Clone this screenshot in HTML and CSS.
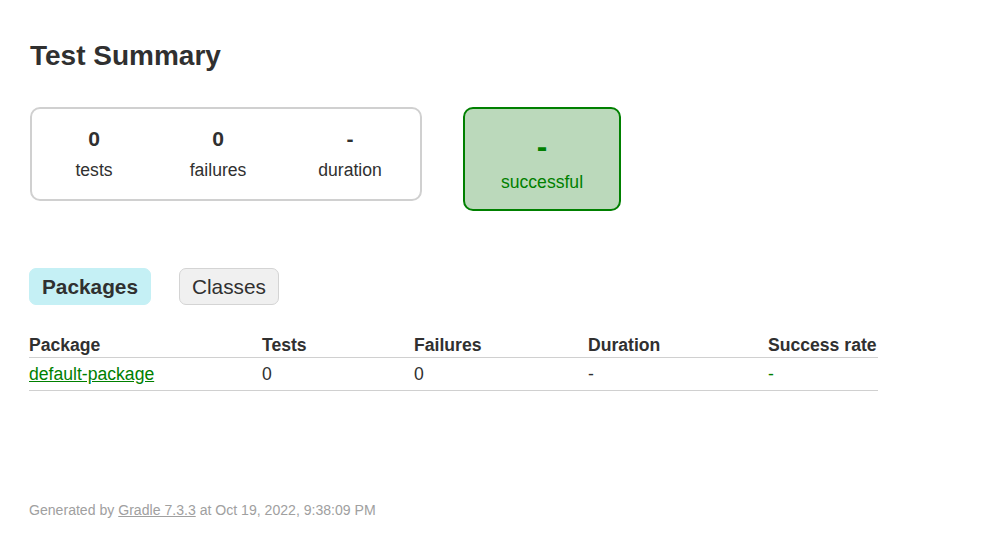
FILE: index.html
```html
<!DOCTYPE html>
<html lang="en">
<head>
    <meta charset="UTF-8">
    <meta name="viewport" content="width=device-width, initial-scale=1.0">
    <title>Test results - Test Summary</title>
    <link rel="stylesheet" href="styles.css">
</head>
<body>
    <div class="content">
        <h1>Test Summary</h1>
        <div class="summary">
            <div class="summary-group">
                <div class="info-box info-tests">
                    <div class="counter">0</div>
                    <p>tests</p>
                </div>
                <div class="info-box info-failures">
                    <div class="counter">0</div>
                    <p>failures</p>
                </div>
                <div class="info-box info-duration">
                    <div class="counter">-</div>
                    <p>duration</p>
                </div>
            </div>
            <div class="success-rate success">
                <div class="percent">-</div>
                <p>successful</p>
            </div>
        </div>

        <ul class="tab-links">
            <li class="selected"><a href="#tab0">Packages</a></li>
            <li><a href="#tab1">Classes</a></li>
        </ul>

        <div class="tab">
            <table>
                <thead>
                    <tr>
                        <th class="col-package">Package</th>
                        <th class="col-tests">Tests</th>
                        <th class="col-failures">Failures</th>
                        <th class="col-duration">Duration</th>
                        <th class="col-rate">Success rate</th>
                    </tr>
                </thead>
                <tbody>
                    <tr>
                        <td class="success"><a href="#">default-package</a></td>
                        <td>0</td>
                        <td>0</td>
                        <td>-</td>
                        <td class="success">-</td>
                    </tr>
                </tbody>
            </table>
        </div>

        <div class="footer">
            Generated by <a href="#">Gradle 7.3.3</a> at Oct 19, 2022, 9:38:09 PM
        </div>
    </div>
</body>
</html>
```

FILE: styles.css
```css
body {
    margin: 0;
    padding: 0;
    font-family: 'Liberation Sans', Arial, sans-serif;
    font-size: 17.6px;
    line-height: 20px;
    color: #303030;
    background: #ffffff;
}
a, a:visited {
    color: #303030;
}
.content {
    padding: 0 29px;
}
h1 {
    margin: 40px 0 0 1px;
    font-size: 28px;
    line-height: 32px;
    white-space: nowrap;
}
.summary {
    display: flex;
    align-items: flex-start;
    margin-top: 35px;
    margin-left: 1px;
}
.summary-group {
    display: flex;
    padding: 3px;
    border: solid 2px #d0d0d0;
    border-radius: 10px;
}
.info-box {
    padding: 15px 0 16px 0;
    text-align: center;
}
.info-box p, .success-rate p {
    margin: 0;
}
.info-tests { width: 118px; }
.info-failures { width: 130px; }
.info-duration { width: 134px; }
.counter {
    font-size: 120%;
    font-weight: bold;
    line-height: 24px;
    margin-bottom: 9px;
}
.success-rate {
    width: 154px;
    margin-left: 41px;
    padding: 19px 0 17px 0;
    text-align: center;
    border: solid 2px #008000;
    border-radius: 10px;
    background-color: #bbd9bb;
}
.percent {
    font-size: 180%;
    font-weight: bold;
    line-height: 36px;
    margin-bottom: 8px;
}
.success, .success a, .success a:visited {
    color: #008000;
}
.tab-links {
    display: flex;
    margin: 57px 0 0 0;
    padding: 0;
    list-style: none;
}
.tab-links li {
    padding: 5px 12px;
    margin-right: 28px;
    border: solid 1px #d4d4d4;
    border-radius: 7px;
    background-color: #f0f0f0;
}
.tab-links li:hover {
    background-color: #fafafa;
}
.tab-links li.selected {
    background-color: #c5f0f5;
    border-color: #c5f0f5;
    font-weight: bold;
}
.tab-links a {
    display: block;
    font-size: 20.8px;
    line-height: 25px;
    text-decoration: none;
}
.tab table {
    width: 849px;
    margin-top: 28px;
    table-layout: fixed;
    border-collapse: collapse;
    border-bottom: solid #d0d0d0 1px;
}
.tab th {
    padding: 2px 0 2px 0;
    text-align: left;
    white-space: nowrap;
    border-bottom: solid #d0d0d0 1px;
}
.tab td {
    padding: 6px 0 6px 0;
    white-space: nowrap;
}
.col-package { width: 233px; }
.col-tests { width: 152px; }
.col-failures { width: 174px; }
.col-duration { width: 180px; }
.col-rate { width: 110px; }
.footer {
    margin-top: 111px;
    font-size: 80%;
    line-height: 16px;
    white-space: nowrap;
    color: #a0a0a0;
}
.footer a, .footer a:visited {
    color: #a0a0a0;
}
```
